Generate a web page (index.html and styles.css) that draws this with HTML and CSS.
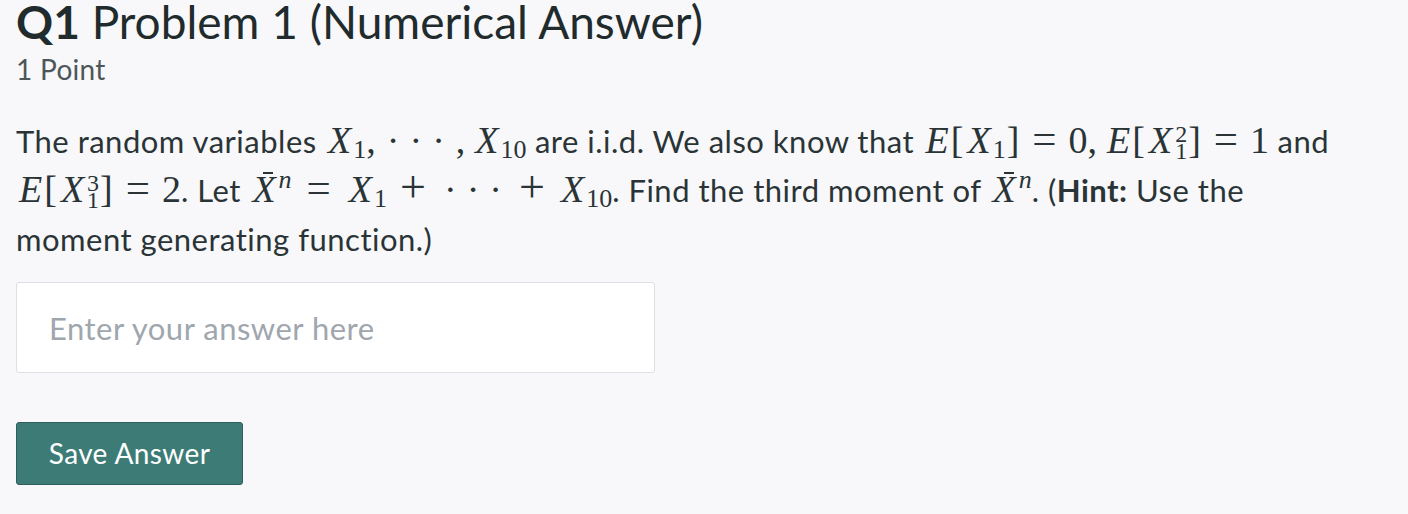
FILE: index.html
```html
<!DOCTYPE html>
<html>
<head>
<meta charset="utf-8">
<link rel="stylesheet" href="styles.css">
</head>
<body>
<div class="question">
  <h1 class="title"><strong>Q1</strong> Problem 1 (Numerical Answer)</h1>
  <div class="points">1 Point</div>
  <p class="body">The random variables <span class="m"><i>X</i><sub>1</sub>,<span class="cdots">···</span>,<span class="sp"></span><i>X</i><sub>10</sub></span> are i.i.d. We also know that <span class="m"><i>E</i><span class="br">[</span><i>X</i><sub>1</sub><span class="br">]</span><span class="op">=</span>0,<span class="sp"></span><i>E</i><span class="br">[</span><i>X</i><span class="ss"><span>2</span><span>1</span></span><span class="br">]</span><span class="op">=</span>1</span> and <span class="m"><i>E</i><span class="br">[</span><i>X</i><span class="ss"><span>3</span><span>1</span></span><span class="br">]</span><span class="op">=</span>2</span>. Let <span class="m"><i class="bar">X</i><sup><i>n</i></sup><span class="op wide">=</span><i>X</i><sub>1</sub><span class="op plus">+</span><span class="cdots tight">···</span><span class="op plus">+</span><i>X</i><sub>10</sub></span>. Find the third moment of <span class="m"><i class="bar">X</i><sup><i>n</i></sup></span>. (<b>Hint:</b> Use the moment generating function.)</p>
  <div class="answer">
    <input class="field" type="text" placeholder="Enter your answer here">
  </div>
  <button class="save">Save Answer</button>
</div>
</body>
</html>
```
FILE: styles.css
```css
html, body {
  margin: 0;
  padding: 0;
  background: #f8f8fa;
}
body {
  font-family: "Lato", "Open Sans", sans-serif;
  color: #2a3436;
}
.question {
  padding: 0 16px;
}
.title {
  margin: 0;
  font-size: 46px;
  line-height: 44px;
  font-weight: 400;
  color: #1f2b2d;
}
.title strong {
  font-weight: 700;
}
.points {
  margin-top: 9px;
  font-size: 28px;
  line-height: 32px;
  letter-spacing: 0.3px;
  color: #4d5759;
}
.body {
  margin: 32px 0 0;
  font-size: 31px;
  line-height: 49px;
  letter-spacing: 0.5px;
  width: 1335px;
}
.body b {
  font-weight: 700;
}
.m {
  font-family: "Liberation Serif", "DejaVu Serif", serif;
  font-size: 38px;
  line-height: 0;
  letter-spacing: 0;
  white-space: nowrap;
}
.m i {
  font-style: italic;
  padding: 0 1px 0 3px;
}
.m sub, .m sup {
  font-size: 26px;
  line-height: 0;
  font-style: normal;
}
.m sub {
  vertical-align: -5px;
  margin-left: 1px;
}
.m sup {
  vertical-align: 14px;
  margin-left: 2px;
}
.m sup i {
  font-style: italic;
  padding: 0;
}
.cdots {
  letter-spacing: 10px;
  padding: 0 0 0 11px;
  margin-right: 1px;
}
.cdots.tight {
  padding: 0 0 0 5px;
  margin-right: -6px;
}
.br {
  font-style: normal;
  padding: 0 1px;
}
.op {
  font-size: 43px;
  padding: 0 12px;
}
.op.wide {
  padding: 0 15px;
}
.op.plus {
  font-size: 46px;
  padding: 0 13px;
}
.sp {
  display: inline-block;
  width: 7px;
}
.ss {
  display: inline-flex;
  flex-direction: column;
  font-size: 24px;
  line-height: 17px;
  vertical-align: 11px;
  margin-left: 2px;
}
.bar {
  position: relative;
}
.bar::after {
  content: "";
  position: absolute;
  left: 14px;
  top: 4px;
  width: 10px;
  height: 2px;
  background: currentColor;
}
.answer {
  margin-top: 18px;
}
.field {
  display: block;
  box-sizing: border-box;
  width: 639px;
  height: 91px;
  background: #fff;
  border: 1px solid #dcdfe3;
  border-radius: 3px;
  padding: 0 32px;
  font-family: inherit;
  font-size: 31px;
  letter-spacing: 0.5px;
  color: #2a3436;
  outline: none;
}
.field::placeholder {
  color: #a0a6ad;
}
.save {
  display: block;
  margin-top: 49px;
  box-sizing: border-box;
  width: 227px;
  height: 63px;
  background: #3d7c76;
  border: 1px solid #2f5f5a;
  border-radius: 3px;
  color: #fff;
  font-family: inherit;
  font-size: 28px;
  letter-spacing: 0.4px;
  padding: 0 0 2px;
  text-align: center;
}
```
